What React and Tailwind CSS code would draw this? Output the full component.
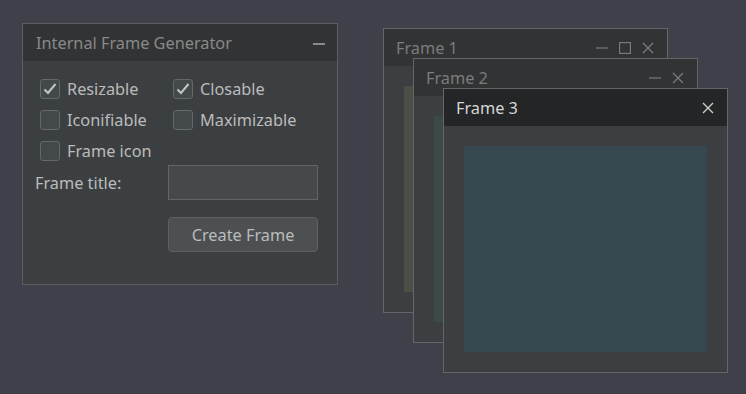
import React from "react";

const font = { fontFamily: '"Noto Sans", "Open Sans", sans-serif' };

function Check({ checked, label }) {
  return (
    <label className="flex items-center gap-[7px] h-[31px]">
      <span className="w-[20px] h-[20px] rounded-[3px] border border-[#656869] bg-[#43494a] flex items-center justify-center">
        {checked && (
          <svg width="16" height="16" viewBox="0 0 16 16">
            <path d="M2.5 8.5 L6 12 L13.5 3" fill="none" stroke="#c4c4c4" strokeWidth="2" />
          </svg>
        )}
      </span>
      <span className="text-[16.3px] text-[#bbbbbb] pt-[1px]">{label}</span>
    </label>
  );
}

function MinIcon({ color }) {
  return (
    <svg width="12" height="12" viewBox="0 0 12 12">
      <path d="M0 6h12" stroke={color} strokeWidth="1.2" />
    </svg>
  );
}

function MaxIcon({ color }) {
  return (
    <svg width="12" height="12" viewBox="0 0 12 12">
      <rect x="0.6" y="0.6" width="10.8" height="10.8" fill="none" stroke={color} strokeWidth="1.2" />
    </svg>
  );
}

function CloseIcon({ color }) {
  return (
    <svg width="12" height="12" viewBox="0 0 12 12">
      <path d="M1 1L11 11M11 1L1 11" stroke={color} strokeWidth="1.3" />
    </svg>
  );
}

function Frame({ title, left, top, active, min, max, fill }) {
  const iconColor = active ? "#d0d0d0" : "#7a7a7a";
  return (
    <div
      className="absolute w-[285px] h-[285px] border border-[#646668] bg-[#3c3f41] flex flex-col"
      style={{ left, top }}
    >
      <div
        className={
          "h-[37px] flex items-center justify-between pl-[12px] pr-[13px] " +
          (active ? "bg-[#242526]" : "bg-[#313335]")
        }
      >
        <span className={"text-[16.3px] pt-[2px] " + (active ? "text-[#d6d6d6]" : "text-[#7c7c7c]")}>{title}</span>
        <div className="flex items-center gap-[11px]">
          {min && <MinIcon color={iconColor} />}
          {max && <MaxIcon color={iconColor} />}
          <CloseIcon color={iconColor} />
        </div>
      </div>
      <div className="flex-1 p-[20px]">
        <div className={"w-full h-full " + fill} />
      </div>
    </div>
  );
}

export default function App() {
  return (
    <div className="relative w-[746px] h-[394px] bg-[#3e4149] overflow-hidden" style={font}>
      {/* generator */}
      <div className="absolute left-[22px] top-[23px] w-[316px] h-[262px] border border-[#5c5f61] bg-[#3c3f41] flex flex-col">
        <div className="h-[37px] bg-[#313335] flex items-center justify-between pl-[13px] pr-[12px]">
          <span className="text-[16.3px] text-[#898989] pt-[2px]">Internal Frame Generator</span>
          <div className="w-[12px] h-[2px] bg-[#8a8a8a] mt-[3px]" />
        </div>
        <div className="pt-[12px] pl-[17px]">
          <div className="grid grid-cols-[133px_auto]">
            <Check checked label="Resizable" />
            <Check checked label="Closable" />
            <Check label="Iconifiable" />
            <Check label="Maximizable" />
            <Check label="Frame icon" />
          </div>
        </div>
        <div className="flex items-center pl-[12px] -mt-[1px]">
          <span className="w-[133px] text-[16.3px] text-[#bbbbbb] pt-[1px]">Frame title:</span>
          <div className="w-[150px] h-[35px] bg-[#45494a] border border-[#646464]" />
        </div>
        <div className="pl-[145px] mt-[17px]">
          <button className="w-[150px] h-[35px] rounded-[4px] bg-[#4c5052] border border-[#5e6162] text-[16.3px] text-[#bbbbbb] pt-[1px]">
            Create Frame
          </button>
        </div>
      </div>

      <Frame title="Frame 1" left={383} top={28} min max fill="bg-[#4a5046]" />
      <Frame title="Frame 2" left={413} top={58} min fill="bg-[#3b4a45]" />
      <Frame title="Frame 3" left={443} top={88} active fill="bg-[#37474f]" />
    </div>
  );
}
